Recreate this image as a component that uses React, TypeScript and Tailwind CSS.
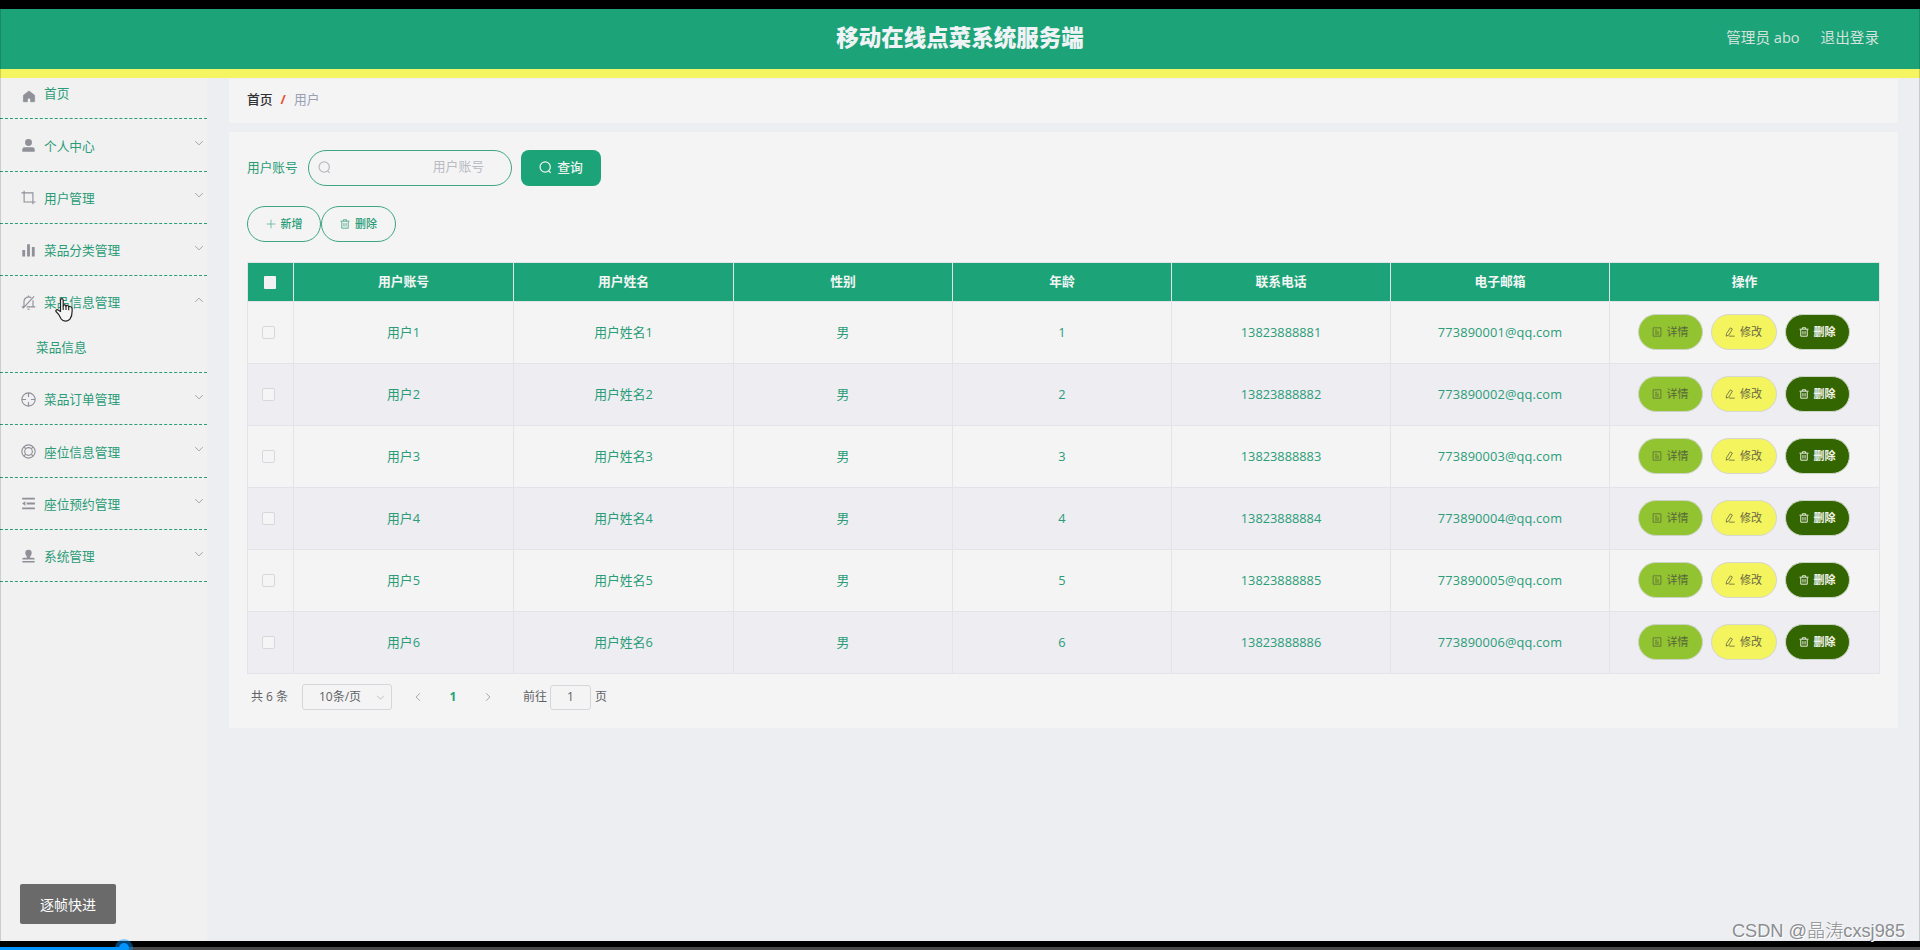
import React from 'react';
import clsx from 'clsx';

type IconProps = { className?: string };

const Svg: React.FC<IconProps & { children: React.ReactNode }> = ({ className, children }) => (
  <svg
    viewBox="0 0 16 16"
    fill="none"
    stroke="currentColor"
    strokeWidth="1.2"
    className={clsx('shrink-0', className)}
  >
    {children}
  </svg>
);

const HomeIcon = ({ className }: IconProps) => (
  <Svg className={className}>
    <path d="M8 2.2 1.6 7.2v7.4h4.6v-4h3.6v4h4.6V7.2z" fill="currentColor" strokeWidth="0.8" strokeLinejoin="round" />
  </Svg>
);

const UserIcon = ({ className }: IconProps) => (
  <Svg className={className}>
    <circle cx="8" cy="4.8" r="3.7" fill="currentColor" stroke="none" />
    <path d="M1.4 14.6v-2.4q0-2.4 2.4-2.4h8.4q2.4 0 2.4 2.4v2.4z" fill="currentColor" stroke="none" />
  </Svg>
);

const CropIcon = ({ className }: IconProps) => (
  <Svg className={className}>
    <path d="M3.3.8v12h12.2M.5 3h12.2v12.2" />
  </Svg>
);

const DataIcon = ({ className }: IconProps) => (
  <Svg className={className}>
    <path d="M1.4 7.5h3v7h-3zM6.5 1.2h3v13.3h-3zM11.6 4.2h3v10.3h-3z" fill="currentColor" stroke="none" />
  </Svg>
);

const MuteIcon = ({ className }: IconProps) => (
  <Svg className={className}>
    <path d="M3.2 12.3V7A4.8 4.8 0 0 1 11 3.1M12.8 5.6v6.7M.8 12.6h2.6M6 12.6h9.2M6.8 15.2h2.4M8 .6v1.2M14 1.4 2 14.2" />
  </Svg>
);

const AimIcon = ({ className }: IconProps) => (
  <Svg className={className}>
    <circle cx="8" cy="8" r="7.1" />
    <path d="M8 1v4.4M8 10.6V15M1 8h4.4M10.6 8H15" />
  </Svg>
);

const HelpIcon = ({ className }: IconProps) => (
  <Svg className={className}>
    <circle cx="8" cy="8" r="7.1" />
    <circle cx="8" cy="8" r="4.1" />
    <path d="m3 3 2.2 2.2M13 3l-2.2 2.2M3 13l2.2-2.2M13 13l-2.2-2.2" />
  </Svg>
);

const FoldIcon = ({ className }: IconProps) => (
  <Svg className={className}>
    <path d="M1.2 2.8h13.6M6 8h8.8M1.2 13.2h13.6" strokeWidth="1.9" />
    <path d="M1.2 8 4.6 5.6v4.8z" fill="currentColor" stroke="none" />
  </Svg>
);

const StampIcon = ({ className }: IconProps) => (
  <Svg className={className}>
    <path
      d="M8 .8a3.4 3.4 0 0 1 3.4 3.6C11.4 6.3 9.6 7 9.6 9.4h3.8q1.2 0 1.2 1.8H1.4q0-1.800 1.200-1.800h3.800C6.400 7 4.600 6.300 4.600 4.400A3.400 3.400 0 0 1 8 .8zM1.400 12.900h13.200v1.600H1.400z"
      fill="currentColor"
      stroke="none"
    />
  </Svg>
);

const ArrowIcon = ({ className }: IconProps) => (
  <Svg className={className}>
    <path d="m2 5 6 6 6-6" strokeWidth="1.6" />
  </Svg>
);

const SearchIcon = ({ className }: IconProps) => (
  <Svg className={className}>
    <circle cx="7.6" cy="7.4" r="6.3" strokeWidth="1.5" />
    <path d="m11.8 12 2.6 2.6" strokeWidth="1.5" />
  </Svg>
);

const PlusIcon = ({ className }: IconProps) => (
  <Svg className={className}>
    <path d="M8 1v14M1 8h14" strokeWidth="1.3" />
  </Svg>
);

const TrashIcon = ({ className }: IconProps) => (
  <Svg className={className}>
    <path d="M.8 3.5h14.4M5.4 3.3V1.2h5.2v2.1M2.8 4v10.7h10.4V4M6.3 6.5V12M9.7 6.5V12" strokeWidth="1.5" />
  </Svg>
);

const DocIcon = ({ className }: IconProps) => (
  <Svg className={className}>
    <path d="M1.8 1.3h12.4v13.4H1.8zM4.8 5.2h3.4M4.8 8.2h6.4M4.8 11.2h6.4" />
  </Svg>
);

const EditIcon = ({ className }: IconProps) => (
  <Svg className={className}>
    <path d="M8.5 1.4 11.8 3.3 6.3 12.7 2 14.7 2.3 10.7zM6.5 14.6h9" strokeWidth="1.3" strokeLinejoin="round" />
  </Svg>
);

const menus = [
  { label: '个人中心', icon: UserIcon },
  { label: '用户管理', icon: CropIcon },
  { label: '菜品分类管理', icon: DataIcon },
  { label: '菜品信息管理', icon: MuteIcon, children: ['菜品信息'] },
  { label: '菜品订单管理', icon: AimIcon },
  { label: '座位信息管理', icon: HelpIcon },
  { label: '座位预约管理', icon: FoldIcon },
  { label: '系统管理', icon: StampIcon },
];

const columns = ['用户账号', '用户姓名', '性别', '年龄', '联系电话', '电子邮箱', '操作'];

const rows = [1, 2, 3, 4, 5, 6].map((n) => ({
  account: `用户${n}`,
  name: `用户姓名${n}`,
  gender: '男',
  age: n,
  phone: `1382388888${n}`,
  email: `77389000${n}@qq.com`,
}));

const Header = () => (
  <header className="relative flex h-[69px] shrink-0 items-center justify-center border-b-[9px] border-[#f5f562] bg-[#1ca478]">
    <h1 className="pb-px text-[22.5px] leading-none font-black text-[#f0f3f5]">移动在线点菜系统服务端</h1>
    <div className="absolute right-[41px] flex gap-[21px] pb-[2px] text-[14.6px] text-[#d5e2de]">
      <span>管理员 abo</span>
      <span>退出登录</span>
    </div>
  </header>
);

const Sidebar = () => (
  <aside className="w-[207px] shrink-0 bg-[#f1f1f1] text-[12.7px] text-[#2a9c77]">
    <div className="flex h-[41.4px] items-start border-b border-dashed border-[#2a9c77] pt-[5px] pl-[22px]">
      <HomeIcon className="mt-[6px] h-[14px] w-[14px] text-[#8f9098]" />
      <span className="ml-2 leading-5">首页</span>
    </div>
    {menus.map(({ label, icon: Icon, children }) => (
      <div key={label} className="border-b border-dashed border-[#2a9c77]">
        <div className="flex h-[51.3px] items-center pt-px pr-[3px] pl-[21px]">
          <Icon className="h-[15px] w-[15px] text-[#8f9098]" />
          <span className="ml-2 leading-5">{label}</span>
          <ArrowIcon
            className={clsx('mb-[5px] ml-auto h-[10px] w-[10px] text-[#a4a5ab]', children && 'rotate-180')}
          />
        </div>
        {children?.map((child) => (
          <div key={child} className="flex h-[44.6px] items-start pt-[9px] pl-9 leading-5">
            {child}
          </div>
        ))}
      </div>
    ))}
  </aside>
);

const Checkbox = () => <span className="block h-[13px] w-[13px] rounded-[2px] border border-[#d7d8dd] bg-[#f5f5f5]" />;

const cell = 'border-r border-b border-[#e3e4ea] p-0 text-center';

const UserTable = () => (
  <table className="mt-5 w-[1633px] table-fixed border-separate border-spacing-0 border-t border-l border-[#e3e4ea] text-[#2a9c77]">
    <colgroup>
      <col className="w-[46px]" />
      <col className="w-[220px]" />
      <col className="w-[220px]" />
      <col className="w-[219px]" />
      <col className="w-[219px]" />
      <col className="w-[219px]" />
      <col className="w-[219px]" />
      <col className="w-[270px]" />
    </colgroup>
    <thead>
      <tr className="h-[39px] bg-[#1ca478] text-[#f3f5f5]">
        <th className={cell}>
          <span className="ml-4 block h-[13px] w-[12px] rounded-[1px] bg-[#f2f2f2]" />
        </th>
        {columns.map((title) => (
          <th key={title} className={cell}>
            {title}
          </th>
        ))}
      </tr>
    </thead>
    <tbody>
      {rows.map((row, i) => (
        <tr key={row.account} className={clsx('h-[62px]', i % 2 ? 'bg-[#ededf2]' : 'bg-[#f4f4f4]')}>
          <td className={cell}>
            <div className="pl-[14px]">
              <Checkbox />
            </div>
          </td>
          <td className={cell}>{row.account}</td>
          <td className={cell}>{row.name}</td>
          <td className={cell}>{row.gender}</td>
          <td className={cell}>{row.age}</td>
          <td className={cell}>{row.phone}</td>
          <td className={clsx(cell, 'tracking-[0.15px]')}>{row.email}</td>
          <td className={cell}>
            <div className="flex justify-center gap-2 pr-[2px] pb-px text-[11px]">
              <button className="flex h-9 w-[65px] items-center justify-center gap-[5px] rounded-full border border-[#ccd3c4] bg-[#92c432] text-[#56663a]">
                <DocIcon className="h-[10px] w-[10px]" />
                详情
              </button>
              <button className="flex h-9 w-[66px] items-center justify-center gap-[5px] rounded-full border border-[#d6d6d2] bg-[#f4f45f] text-[#66663f]">
                <EditIcon className="h-[10px] w-[10px]" />
                修改
              </button>
              <button className="flex h-9 w-[65px] items-center justify-center gap-[5px] rounded-full border border-[#cdd5c6] bg-[#336600] font-bold text-[#f0f3ec]">
                <TrashIcon className="h-[10px] w-[10px]" />
                删除
              </button>
            </div>
          </td>
        </tr>
      ))}
    </tbody>
  </table>
);

const Pagination = () => (
  <div className="flex h-[46px] items-center pl-1 text-[12px] text-[#606266]">
    <span className="w-[51px]">共 6 条</span>
    <div className="flex h-[26px] w-[90px] items-center rounded-[3px] border border-[#d5d6dc] pr-[6px] pl-[16px]">
      10条/页
      <ArrowIcon className="ml-auto h-[9px] w-[9px] text-[#b7b9c0]" />
    </div>
    <ArrowIcon className="ml-[21px] h-[10px] w-[10px] rotate-90 text-[#a5a7ae]" />
    <span className="w-[60px] text-center font-bold text-[#1ca478]">1</span>
    <ArrowIcon className="h-[10px] w-[10px] -rotate-90 text-[#a5a7ae]" />
    <span className="ml-[30px]">前往</span>
    <span className="mr-1 ml-[3px] flex h-[25px] w-[41px] items-center justify-center rounded-[3px] border border-[#d5d6dc]">
      1
    </span>
    <span>页</span>
  </div>
);

const HandCursor = () => (
  <svg viewBox="0 0 18 24" className="absolute top-[298px] left-[55px] h-6 w-[18px]">
    <path
      d="M5.5 13.5V2.300q0-1.600 1.300-1.600T8.200 2.300V8q.2-1.300 1.400-1.200T11 8.300q.3-1 1.400-.8t1.300 1.500q.4-.8 1.600-.5t1.700 1.500c.6 6 .1 8-1.900 10.800-2.100 3-7 3-8.900.2C5 18.500 3.600 15.600 1.200 13.800c-1-1.300.6-2.800 2-1.800z"
      fill="#f5f5f5"
      stroke="#222"
      strokeWidth="1.2"
      strokeLinejoin="round"
    />
    <path d="M8.2 8v4M11 8.3V12M13.700 9v3.300" stroke="#222" strokeWidth="1.1" />
  </svg>
);

const App: React.FC = () => (
  <div className="relative flex h-[950px] w-[1920px] flex-col overflow-hidden bg-[#edeef2] font-['Open_Sans','Noto_Sans_CJK_SC',sans-serif] text-[12.8px]">
    <div className="h-[9px] shrink-0 bg-black" />
    <Header />
    <div className="flex min-h-0 flex-1">
      <Sidebar />
      <main className="ml-[22px] w-[1669px]">
        <nav className="mt-px flex h-11 items-center rounded-b-[3px] bg-[#f4f4f4] pb-[2px] pl-[18px]">
          <span className="font-medium text-[#303133]">首页</span>
          <span className="mx-[8px] font-bold text-[#e8502e]">/</span>
          <span className="text-[#9a9fb5]">用户</span>
        </nav>
        <section className="mt-[9px] h-[596px] bg-[#f4f4f4] pt-[18px] pl-[18px]">
          <div className="flex h-9 items-center">
            <span className="w-[51px] whitespace-nowrap text-[12.7px] text-[#2a9c77]">用户账号</span>
            <div className="ml-[10px] flex h-9 w-[204px] items-center justify-between rounded-full border border-[#3fa583] pr-[27px] pb-[2px] pl-[9px] text-[#b9bbc3]">
              <SearchIcon className="h-[13px] w-[13px]" />
              用户账号
            </div>
            <button className="ml-[9px] flex h-9 w-20 items-center justify-center gap-[5px] rounded-[8px] bg-[#1ca478] pb-px font-medium text-[#f0f5f3]">
              <SearchIcon className="h-[13px] w-[13px]" />
              查询
            </button>
          </div>
          <div className="mt-5 flex text-[11px] font-medium text-[#2a9c77]">
            <button className="flex h-9 w-[74px] items-center justify-center gap-[5px] rounded-full border border-[#3fa583]">
              <PlusIcon className="h-[10px] w-[10px] opacity-70" />
              新增
            </button>
            <button className="flex h-9 w-[75px] items-center justify-center gap-[5px] rounded-full border border-[#3fa583]">
              <TrashIcon className="h-[10px] w-[10px] opacity-80" />
              删除
            </button>
          </div>
          <UserTable />
          <Pagination />
        </section>
      </main>
    </div>

    {/* player chrome */}
    <footer className="relative h-[9px] shrink-0 bg-black pt-[6px]">
      <div className="h-[3px] bg-[#4a4a4a]">
        <div className="h-full w-[124px] bg-[#0094ff]" />
      </div>
      <span className="absolute -top-[2px] left-[115px] h-[18px] w-[18px] rounded-full bg-[#0094ff]/45" />
      <span className="absolute top-[2px] left-[119px] h-[10px] w-[10px] rounded-full bg-[#0094ff]" />
    </footer>
    <div className="absolute bottom-[26px] left-5 flex h-10 w-24 items-center justify-center rounded-[2px] bg-[#6a6a6a] text-[14px] text-white">
      逐帧快进
    </div>
    <div className="absolute right-[15px] bottom-[7px] font-['Liberation_Sans','Noto_Sans_CJK_SC',sans-serif] text-[18.2px] leading-6 font-light text-[#8c8d90] [text-shadow:1px_1px_0_#fff]">
      CSDN @晶涛cxsj985
    </div>
    <HandCursor />
    <div className="absolute top-[9px] bottom-[9px] left-0 w-px bg-black/15" />
    <div className="absolute top-[9px] right-0 bottom-[9px] w-px bg-black/15" />
  </div>
);

export default App;
